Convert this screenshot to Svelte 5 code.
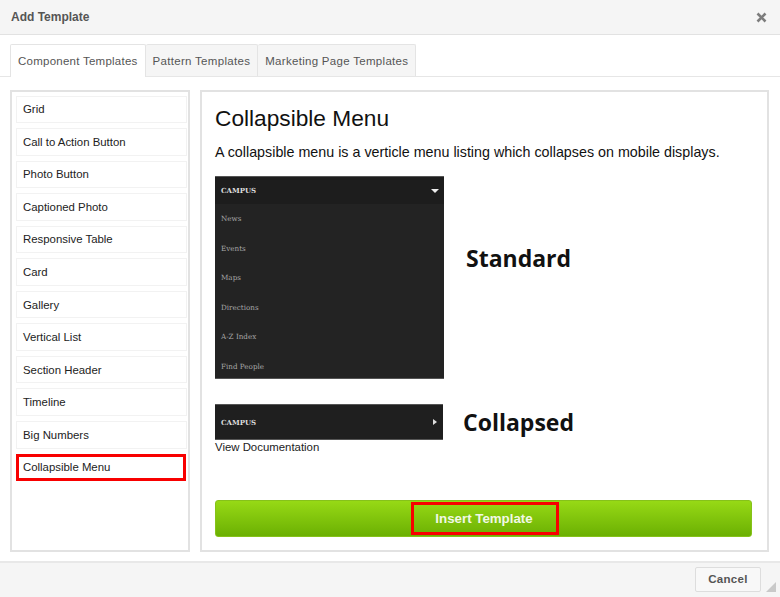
<script>
  const tabs = ["Component Templates", "Pattern Templates", "Marketing Page Templates"];
  const templates = [
    "Grid",
    "Call to Action Button",
    "Photo Button",
    "Captioned Photo",
    "Responsive Table",
    "Card",
    "Gallery",
    "Vertical List",
    "Section Header",
    "Timeline",
    "Big Numbers",
    "Collapsible Menu"
  ];
  const menuLinks = ["News", "Events", "Maps", "Directions", "A-Z Index", "Find People"];
</script>

<div class="dialog">
  <header class="titlebar">
    <span class="title">Add Template</span>
    <svg class="close" width="11" height="11" viewBox="0 0 11 11">
      <path d="M1.5 1.5 L9.5 9.5 M9.5 1.5 L1.5 9.5" stroke="#7d7d7d" stroke-width="2.6" fill="none" />
    </svg>
  </header>

  <div class="body">
    <nav class="tabs">
      {#each tabs as tab, i}
        <span class="tab" class:active={i === 0}>{tab}</span>
      {/each}
    </nav>

    <div class="panels">
      <aside class="sidebar">
        {#each templates as item, i}
          <div class="item" class:selected={i === templates.length - 1}>{item}</div>
        {/each}
      </aside>

      <main class="preview">
        <h1>Collapsible Menu</h1>
        <p>A collapsible menu is a verticle menu listing which collapses on mobile displays.</p>

        <div class="sample standard">
          <div class="menu">
            <div class="menu-head">
              <span>CAMPUS</span>
              <i class="caret-down"></i>
            </div>
            {#each menuLinks as link}
              <div class="menu-link">{link}</div>
            {/each}
          </div>
          <span class="label">Standard</span>
        </div>

        <div class="sample collapsed">
          <div class="menu closed">
            <span>CAMPUS</span>
            <i class="caret-right"></i>
          </div>
          <span class="label">Collapsed</span>
        </div>

        <div class="doc-link">View Documentation</div>

        <div class="insert">
          <span class="insert-mark">Insert Template</span>
        </div>
      </main>
    </div>
  </div>

  <footer class="footer">
    <span class="cancel">Cancel</span>
    <svg class="grip" width="10" height="10" viewBox="0 0 10 10">
      <path d="M10 0 L10 10 L0 10 Z" fill="#c9c9c9" />
    </svg>
  </footer>
</div>

<style>
  :global(body) {
    margin: 0;
    background: #fff;
  }
  .dialog {
    width: 780px;
    height: 597px;
    display: flex;
    flex-direction: column;
    overflow: hidden;
    font-family: "Liberation Sans", Arial, sans-serif;
    color: #222;
  }
  .titlebar {
    height: 35px;
    flex: none;
    display: flex;
    align-items: center;
    justify-content: space-between;
    padding: 0 13px 1px 11px;
    box-sizing: border-box;
    background: #f5f5f5;
    border-bottom: 1px solid #e2e2e2;
  }
  .title {
    font-size: 12px;
    font-weight: bold;
    color: #555;
  }
  .close {
    margin-top: 1px;
  }
  .body {
    flex: 1;
    min-height: 0;
    display: flex;
    flex-direction: column;
    padding-top: 9px;
  }
  .tabs {
    height: 32px;
    flex: none;
    display: flex;
    padding-left: 10px;
    border-bottom: 1px solid #e6e6e6;
  }
  .tab {
    height: 31px;
    padding: 0 7px;
    display: flex;
    align-items: center;
    font-size: 11.5px;
    letter-spacing: 0.3px;
    color: #555;
    background: #f5f5f5;
    border: 1px solid #e4e4e4;
    border-bottom: none;
    border-left: none;
    border-radius: 2px 2px 0 0;
  }
  .tab.active {
    background: #fff;
    letter-spacing: 0.25px;
    border-left: 1px solid #e4e4e4;
    height: 32px;
    margin-bottom: -1px;
  }
  .panels {
    flex: 1;
    min-height: 0;
    display: flex;
    gap: 10px;
    padding: 13px 11px 9px 10px;
  }
  .sidebar {
    width: 180px;
    box-sizing: border-box;
    flex: none;
    border: 2px solid #e2e2e2;
    padding: 3.5px 1px 0 4px;
    display: flex;
    flex-direction: column;
    gap: 5px;
  }
  .item {
    height: 27.55px;
    box-sizing: border-box;
    flex: none;
    display: flex;
    align-items: center;
    padding-left: 6px;
    font-size: 11.4px;
    color: #222;
    border: 1px solid #f2f2f2;
  }
  .item.selected {
    border: 3px solid #f80000;
    padding-left: 4px;
    margin-right: 1px;
  }
  .preview {
    flex: 1;
    min-width: 0;
    box-sizing: border-box;
    border: 2px solid #e2e2e2;
    padding: 0 15px 0 13px;
    display: flex;
    flex-direction: column;
  }
  h1 {
    margin: 13px 0 0;
    font-size: 22.7px;
    line-height: 26px;
    font-weight: normal;
    color: #111;
  }
  p {
    margin: 12px 0 0;
    font-size: 14.3px;
    line-height: 18px;
    color: #111;
  }
  .sample {
    display: flex;
    align-items: center;
  }
  .standard {
    margin-top: 15px;
  }
  .collapsed {
    margin-top: 25px;
  }
  .menu {
    width: 229px;
    box-sizing: border-box;
    background: #232323;
    font-family: "DejaVu Serif", "Liberation Serif", serif;
    border: 1px solid #555;
    border-width: 1px 0;
  }
  .menu-head {
    height: 27px;
    display: flex;
    align-items: center;
    justify-content: space-between;
    padding: 0 5px 0 6px;
    background: #1d1d1d;
    font-size: 7px;
    font-weight: bold;
    color: #ddd;
  }
  .menu-link {
    height: 29.5px;
    display: flex;
    align-items: center;
    padding-left: 6px;
    font-size: 7.2px;
    color: #a8a8a8;
  }
  .menu-link:last-child {
    height: 26.5px;
    padding-top: 3px;
    box-sizing: border-box;
  }
  .caret-down {
    width: 0;
    height: 0;
    border-left: 4px solid transparent;
    border-right: 4px solid transparent;
    border-top: 4px solid #eee;
  }
  .caret-right {
    width: 0;
    height: 0;
    border-top: 3.5px solid transparent;
    border-bottom: 3.5px solid transparent;
    border-left: 4px solid #ddd;
  }
  .closed {
    width: 228px;
    height: 36px;
    display: flex;
    align-items: center;
    justify-content: space-between;
    padding: 0 6px;
    background: #1f1f1f;
    font-size: 7px;
    font-weight: bold;
    color: #ddd;
  }
  .label {
    font-family: "Open Sans", sans-serif;
    font-weight: bold;
    font-size: 23px;
    color: #111;
  }
  .standard .label {
    margin: 0 0 40px 22px;
  }
  .collapsed .label {
    margin-left: 20px;
  }
  .doc-link {
    font-size: 11.4px;
    line-height: 14px;
    color: #222;
  }
  .insert {
    margin-top: 46px;
    height: 37px;
    box-sizing: border-box;
    flex: none;
    display: flex;
    align-items: center;
    justify-content: center;
    border: 1px solid #86c21a;
    border-radius: 3px;
    background: linear-gradient(#97d915, #6bb003);
  }
  .insert-mark {
    width: 148px;
    height: 33px;
    box-sizing: border-box;
    margin-left: 3px;
    padding-right: 2px;
    display: flex;
    align-items: center;
    justify-content: center;
    border: 3px solid #f80000;
    font-size: 13.3px;
    font-weight: bold;
    color: #f2f8e6;
  }
  .footer {
    height: 36px;
    flex: none;
    box-sizing: border-box;
    position: relative;
    display: flex;
    align-items: center;
    justify-content: flex-end;
    padding: 0 19px 2px 0;
    background: #f5f5f5;
    border-top: 2px solid #e8e8e8;
  }
  .cancel {
    width: 66px;
    height: 25px;
    box-sizing: border-box;
    display: flex;
    align-items: center;
    justify-content: center;
    font-size: 11.5px;
    font-weight: bold;
    letter-spacing: 0.3px;
    color: #555;
    background: #f8f8f8;
    border: 1px solid #ddd;
    border-radius: 2px;
  }
  .grip {
    position: absolute;
    right: 4px;
    bottom: 5px;
  }
</style>
